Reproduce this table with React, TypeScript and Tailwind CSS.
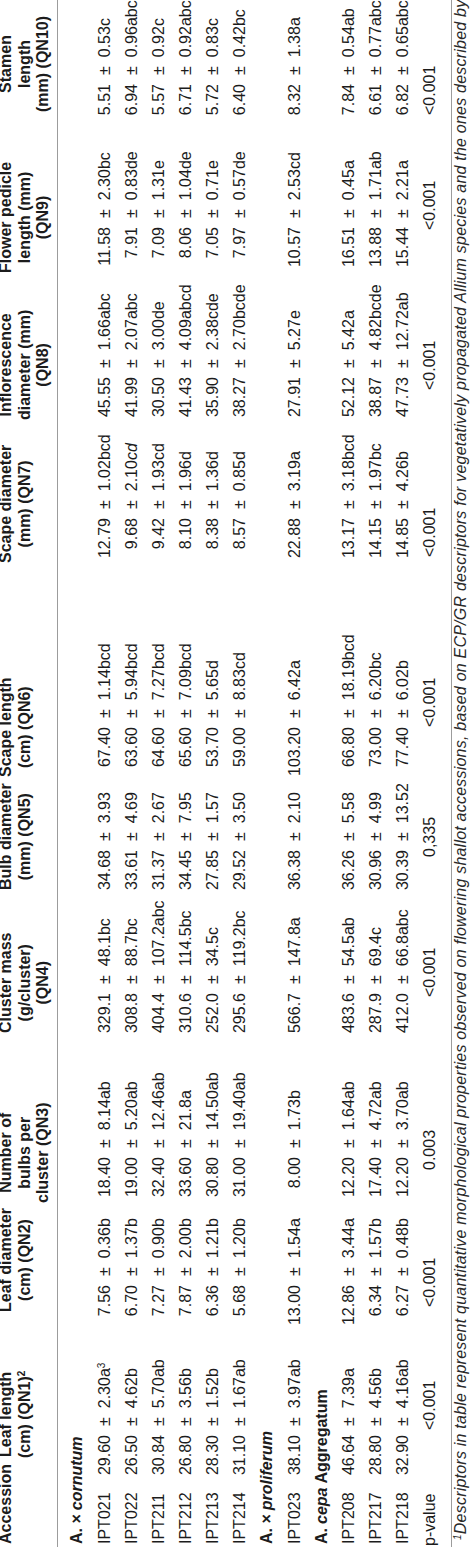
import React from "react";

type Cell = [string, React.ReactNode];
type Row = { id: string; v: Cell[] };

const grp1: Row[] = [
  { id: "IPT021", v: [["29.60", <>2.30a<sup className="text-[10px]">3</sup></>], ["7.56", "0.36b"], ["18.40", "8.14ab"], ["329.1", "48.1bc"], ["34.68", "3.93"], ["67.40", "1.14bcd"], ["12.79", "1.02bcd"], ["45.55", "1.66abc"], ["11.58", "2.30bc"], ["5.51", "0.53c"]] },
  { id: "IPT022", v: [["26.50", "4.62b"], ["6.70", "1.37b"], ["19.00", "5.20ab"], ["308.8", "88.7bc"], ["33.61", "4.69"], ["63.60", "5.94bcd"], ["9.68", <>2.10<i>cd</i></>], ["41.99", "2.07abc"], ["7.91", "0.83de"], ["6.94", "0.96abc"]] },
  { id: "IPT211", v: [["30.84", "5.70ab"], ["7.27", "0.90b"], ["32.40", "12.46ab"], ["404.4", "107.2abc"], ["31.37", "2.67"], ["64.60", "7.27bcd"], ["9.42", "1.93cd"], ["30.50", "3.00de"], ["7.09", "1.31e"], ["5.57", "0.92c"]] },
  { id: "IPT212", v: [["26.80", "3.56b"], ["7.87", "2.00b"], ["33.60", "21.8a"], ["310.6", "114.5bc"], ["34.45", "7.95"], ["65.60", "7.09bcd"], ["8.10", "1.96d"], ["41.43", "4.09abcd"], ["8.06", "1.04de"], ["6.71", "0.92abc"]] },
  { id: "IPT213", v: [["28.30", "1.52b"], ["6.36", "1.21b"], ["30.80", "14.50ab"], ["252.0", "34.5c"], ["27.85", "1.57"], ["53.70", "5.65d"], ["8.38", "1.36d"], ["35.90", "2.38cde"], ["7.05", "0.71e"], ["5.72", "0.83c"]] },
  { id: "IPT214", v: [["31.10", "1.67ab"], ["5.68", "1.20b"], ["31.00", "19.40ab"], ["295.6", "119.2bc"], ["29.52", "3.50"], ["59.00", "8.83cd"], ["8.57", "0.85d"], ["38.27", "2.70bcde"], ["7.97", "0.57de"], ["6.40", "0.42bc"]] },
];
const grp2: Row[] = [
  { id: "IPT023", v: [["38.10", "3.97ab"], ["13.00", "1.54a"], ["8.00", "1.73b"], ["566.7", "147.8a"], ["36.38", "2.10"], ["103.20", "6.42a"], ["22.88", "3.19a"], ["27.91", "5.27e"], ["10.57", "2.53cd"], ["8.32", "1.38a"]] },
];
const grp3: Row[] = [
  { id: "IPT208", v: [["46.64", "7.39a"], ["12.86", "3.44a"], ["12.20", "1.64ab"], ["483.6", "54.5ab"], ["36.26", "5.58"], ["66.80", "18.19bcd"], ["13.17", "3.18bcd"], ["52.12", "5.42a"], ["16.51", "0.45a"], ["7.84", "0.54ab"]] },
  { id: "IPT217", v: [["28.80", "4.56b"], ["6.34", "1.57b"], ["17.40", "4.72ab"], ["287.9", "69.4c"], ["30.96", "4.99"], ["73.00", "6.20bc"], ["14.15", "1.97bc"], ["38.87", "4.82bcde"], ["13.88", "1.71ab"], ["6.61", "0.77abc"]] },
  { id: "IPT218", v: [["32.90", "4.16ab"], ["6.27", "0.48b"], ["12.20", "3.70ab"], ["412.0", "66.8abc"], ["30.39", "13.52"], ["77.40", "6.02b"], ["14.85", "4.26b"], ["47.73", "12.72ab"], ["15.44", "2.21a"], ["6.82", "0.65abc"]] },
];

const pvals = ["<0.001", "<0.001", "0.003", "<0.001", "0,335", "<0.001", "<0.001", "<0.001", "<0.001", "<0.001"];
const pPad = ["pl-[55px]", "pl-[28px]", "pl-[37px]", "pl-[46px]", "pl-[43px]", "pl-[50px]", "pl-[11px]", "pl-[37px]", "pl-[47px]", "pl-[19px]"];

const headers: { lines: React.ReactNode[]; pad: string }[] = [
  { lines: ["Leaf length", <>(cm) (QN1)<sup className="text-[10px]">2</sup></>], pad: "pl-[27px]" },
  { lines: ["Leaf diameter", "(cm) (QN2)"], pad: "pl-[23px]" },
  { lines: ["Number of", "bulbs per", "cluster (QN3)"], pad: "pl-[4px]" },
  { lines: ["Cluster mass", "(g/cluster)", "(QN4)"], pad: "pl-[10px]" },
  { lines: ["Bulb diameter", "(mm) (QN5)"], pad: "pl-[10px]" },
  { lines: ["Scape length", "(cm) (QN6)"], pad: "pl-[0px]" },
  { lines: ["Scape diameter", "(mm) (QN7)"], pad: "pl-[5px]" },
  { lines: ["Inflorescence", "diameter (mm)", "(QN8)"], pad: "pl-[7px]" },
  { lines: ["Flower pedicle", "length (mm)", "(QN9)"], pad: "pl-[4px]" },
  { lines: ["Stamen", "length", "(mm) (QN10)"], pad: "pl-[22px]" },
];

const cols = "grid grid-cols-[62px_150px_128px_164px_143px_123px_209px_141px_150px_143px_200px]";

function Val({ c }: { c: Cell }) {
  return (
    <div className="flex whitespace-nowrap">
      <span className="w-[50px] shrink-0 text-right">{c[0]}</span>
      <span className="px-[9px]">±</span>
      <span>{c[1]}</span>
    </div>
  );
}

function DataRow({ r }: { r: Row }) {
  return (
    <div className={`${cols} h-[27.15px] items-center`}>
      <div className="pl-[3px] whitespace-nowrap">{r.id}</div>
      {r.v.map((c, i) => (
        <Val key={i} c={c} />
      ))}
    </div>
  );
}

function Group({ children }: { children: React.ReactNode }) {
  return <div className="h-[27.15px] flex items-center pl-[3px] font-bold whitespace-nowrap">{children}</div>;
}

export default function App() {
  return (
    <div className="relative w-[474px] h-[1547px] overflow-hidden bg-white">
      <div className="absolute left-0 top-0 w-[1620px] h-[474px] origin-top-left [transform:translateY(1547px)_rotate(-90deg)] font-['Liberation_Sans',Arial,sans-serif] text-[16px] text-[#1c1c1c] leading-[27.15px]">
        <div className="h-[61px] border-b border-[#9c9c9c]">
          <div className={`${cols} -mt-[3px] font-bold leading-[18.5px] items-start`}>
            <div className="pl-[3px]">Accession</div>
            {headers.map((h, i) => (
              <div key={i} className={`${h.pad} flex`}>
                <div className="text-center whitespace-nowrap flex flex-col">
                  {h.lines.map((l, j) => (
                    <div key={j}>{l}</div>
                  ))}
                </div>
              </div>
            ))}
          </div>
        </div>
        <div className="pt-[5.4px] pb-[7.5px]">
          <Group>
            A. × <i className="ml-[4px]">cornutum</i>
          </Group>
          {grp1.map((r) => (
            <DataRow key={r.id} r={r} />
          ))}
          <Group>
            A. × <i className="ml-[4px]">proliferum</i>
          </Group>
          {grp2.map((r) => (
            <DataRow key={r.id} r={r} />
          ))}
          <Group>
            A. <i className="ml-[4px] mr-[4px]">cepa</i> Aggregatum
          </Group>
          {grp3.map((r) => (
            <DataRow key={r.id} r={r} />
          ))}
          <div className={`${cols} h-[27.15px] items-center`}>
            <div className="pl-[1px] whitespace-nowrap">p-value</div>
            {pvals.map((p, i) => (
              <div key={i} className={`${pPad[i]} whitespace-nowrap`}>
                {p}
              </div>
            ))}
          </div>
        </div>
        <div className="border-t border-[#9c9c9c] pl-[7px] italic leading-[18.5px] tracking-[0.22px] whitespace-nowrap text-[#2a2a2a]">
          <sup className="text-[10px]">1</sup>Descriptors in table represent quantitative morphological properties observed on flowering shallot accessions, based on ECP/GR descriptors for vegetatively propagated <i>Allium</i> species and the ones described by
        </div>
      </div>
    </div>
  );
}
